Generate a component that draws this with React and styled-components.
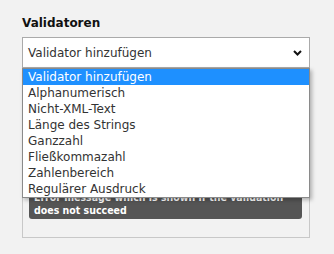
import React, { useState } from "react";
import styled, { createGlobalStyle } from "styled-components";

const GlobalStyle = createGlobalStyle`
  html, body {
    margin: 0;
    padding: 0;
    background: #f2f2f2;
  }
  body {
    font-family: "DejaVu Sans", Verdana, sans-serif;
    color: #333;
  }
`;

const options = [
  "Validator hinzufügen",
  "Alphanumerisch",
  "Nicht-XML-Text",
  "Länge des Strings",
  "Ganzzahl",
  "Fließkommazahl",
  "Zahlenbereich",
  "Regulärer Ausdruck",
];

const Page = styled.div`
  display: flex;
  flex-direction: column;
  width: 288px;
  padding: 16px 24px 16px 22px;
`;

const Title = styled.h3`
  margin: 0 0 6px;
  font-size: 12px;
  line-height: 15px;
  font-weight: bold;
  color: #111;
`;

const SelectWrap = styled.div`
  position: relative;
  z-index: 2;
`;

const SelectBox = styled.div`
  display: flex;
  align-items: center;
  justify-content: space-between;
  height: 31px;
  box-sizing: border-box;
  padding: 0 7px 0 5px;
  background: #fff;
  border: 1px solid #aaa;
  font-size: 12px;
  color: #333;
  cursor: default;
`;

const Chevron = () => (
  <svg width="9" height="6" viewBox="0 0 9 6">
    <polyline
      points="1,1 4.5,4.5 8,1"
      fill="none"
      stroke="#111"
      strokeWidth="2"
    />
  </svg>
);

const Dropdown = styled.ul`
  position: absolute;
  top: 100%;
  left: 0;
  right: 0;
  margin: 0;
  padding: 0;
  list-style: none;
  background: #fff;
  border: 1px solid #8a8a8a;
  box-shadow: 2px 2px 4px rgba(0, 0, 0, 0.28);
`;

const Option = styled.li`
  padding: 0 5px;
  height: 16px;
  font-size: 12px;
  line-height: 16px;
  white-space: nowrap;
  color: ${(p) => (p.$active ? "#fff" : "#333")};
  background: ${(p) => (p.$active ? "#1e90ff" : "transparent")};
`;

const Panel = styled.div`
  display: flex;
  flex-direction: column;
  border: 1px solid #c8c8c8;
  border-top: none;
  padding: 0 7px 18px 6px;
`;

const Fields = styled.div`
  height: 120px;
`;

const HelpBox = styled.div`
  background: #555;
  color: #fff;
  border-radius: 3px;
  padding: 3px 5px 2px;
  font-family: "DejaVu Sans Condensed", "DejaVu Sans", sans-serif;
  font-size: 10.5px;
  line-height: 13px;
  font-weight: bold;
`;

export default function App() {
  const [selected] = useState(0);

  return (
    <Page>
      <GlobalStyle />
      <Title>Validatoren</Title>
      <SelectWrap>
        <SelectBox>
          <span>{options[selected]}</span>
          <Chevron />
        </SelectBox>
        <Dropdown>
          {options.map((o, i) => (
            <Option key={o} $active={i === selected}>
              {o}
            </Option>
          ))}
        </Dropdown>
      </SelectWrap>
      <Panel>
        <Fields />
        <HelpBox>
          Error message which is shown if the validation does not succeed
        </HelpBox>
      </Panel>
    </Page>
  );
}
